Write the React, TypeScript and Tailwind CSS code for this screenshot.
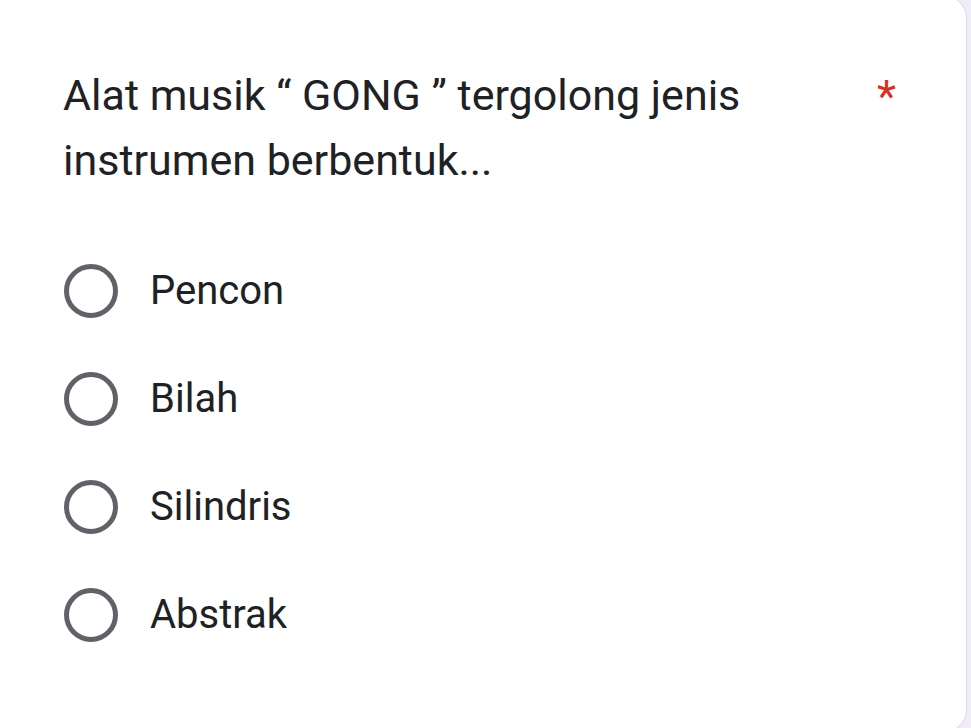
import React from "react";

const options = ["Pencon", "Bilah", "Silindris", "Abstrak"];

export default function App() {
  return (
    <div
      className="w-[971px] h-[728px] overflow-hidden bg-[#f0ebf8]"
      style={{ fontFamily: "Roboto, 'Noto Sans', sans-serif" }}
    >
      <div className="ml-[-13px] mt-[-4px] w-[980px] h-[736px] rounded-[22px] border border-[#dadce0] bg-white pl-[75px] pr-[70px] pt-[66px]">
        <div className="flex items-start text-[#202124]">
          <div className="w-[780px] text-[43px] leading-[65px]">
            Alat musik “ GONG ” tergolong jenis instrumen berbentuk...
          </div>
          <div className="ml-auto text-[44px] leading-[65px] text-[#d93025] pt-[2px]">*</div>
        </div>
        <div className="mt-[44px] flex flex-col">
          {options.map((o) => (
            <div key={o} className="flex h-[108px] items-center">
              <span className="ml-[1px] box-border h-[54px] w-[54px] shrink-0 rounded-full border-[5px] border-[#5f6368]" />
              <span className="ml-[32px] text-[40px] leading-[48px] text-[#202124]">{o}</span>
            </div>
          ))}
        </div>
      </div>
    </div>
  );
}
